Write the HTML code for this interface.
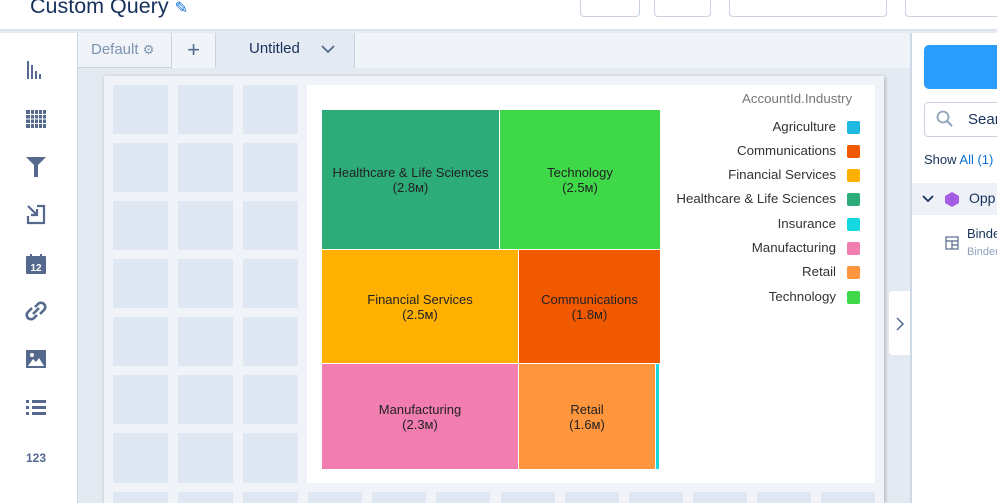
<!DOCTYPE html>
<html style="width:997px;height:503px;overflow:hidden"><head><meta charset="utf-8"><style>
*{margin:0;padding:0;box-sizing:border-box}
body{width:997px;height:503px;overflow:hidden;position:relative;background:#e4eaf2;font-family:"Liberation Sans",sans-serif;color:#16325c}
.a{position:absolute}
.cell{position:absolute;background:#dee7f2}
.tm{position:absolute;display:flex;flex-direction:column;align-items:center;justify-content:center;font-size:13px;color:#222;text-align:center;line-height:15px}
.lg{position:absolute;right:161px;font-size:13.3px;color:#333;text-align:right;white-space:nowrap}
.sw{position:absolute;left:847px;width:13px;height:13px;border-radius:2px}
</style></head><body>
<div class="a" style="left:0;top:0;width:997px;height:31px;background:#fff;border-bottom:2px solid #dde4ee"></div>
<div class="a" style="left:30px;top:-6px;font-size:21.5px;color:#16325c">Custom Query <span style="color:#0b6fd6;font-size:16px">✎</span></div>
<div class="a" style="left:580px;top:-10px;width:60px;height:27px;border:1px solid #c9d3e0;border-radius:4px;background:#fff"></div>
<div class="a" style="left:654px;top:-10px;width:57px;height:27px;border:1px solid #c9d3e0;border-radius:4px;background:#fff"></div>
<div class="a" style="left:729px;top:-10px;width:158px;height:27px;border:1px solid #c9d3e0;border-radius:4px;background:#fff"></div>
<div class="a" style="left:905px;top:-10px;width:100px;height:27px;border:1px solid #c9d3e0;border-radius:4px;background:#fff"></div>
<div class="a" style="left:0;top:33px;width:78px;height:470px;background:#fff;border-right:1px solid #cfd9e6"></div>
<svg class="a" style="left:0;top:33px" width="77" height="470" fill="#54698d">
<g transform="translate(27,28)"><rect x="0" y="0" width="2" height="18"/><rect x="4" y="4" width="2" height="14"/><rect x="8" y="10" width="2" height="8"/><rect x="12" y="13" width="2" height="5"/></g>
<g transform="translate(26,77)"><rect width="20" height="18"/><g stroke="#fff" stroke-width="1"><line x1="0" y1="4.5" x2="20" y2="4.5"/><line x1="0" y1="9" x2="20" y2="9"/><line x1="0" y1="13.5" x2="20" y2="13.5"/><line x1="4.5" y1="0" x2="4.5" y2="18"/><line x1="8.5" y1="0" x2="8.5" y2="18"/><line x1="12.5" y1="0" x2="12.5" y2="18"/><line x1="16.5" y1="0" x2="16.5" y2="18"/></g></g>
<path transform="translate(26,124)" d="M0 0H20L12 8V20H8V8Z"/>
<g transform="translate(27,172)" fill="none" stroke="#54698d" stroke-width="2.2"><path d="M10 1H17V18H1V11"/><path d="M1 1L10 10M10 4V10H4"/></g>
<g transform="translate(26,221)"><rect y="2" width="20" height="18" rx="1"/><rect x="4" y="0" width="2" height="4"/><rect x="14" y="0" width="2" height="4"/><text x="10" y="17" fill="#fff" font-size="10" font-weight="bold" text-anchor="middle" font-family="Liberation Sans">12</text></g>
<g transform="translate(26,268)" fill="none" stroke="#54698d" stroke-width="2.6"><path d="M9 6L12 3A4 4 0 0 1 18 9L14 13"/><path d="M11 14L8 17A4 4 0 0 1 2 11L6 7"/><path d="M7 13L13 7"/></g>
<g transform="translate(26,317)"><rect width="20" height="18"/><path d="M2 16L7 9L10 12L13 8L18 16Z" fill="#fff"/><circle cx="6" cy="5" r="2" fill="#fff"/></g>
<g transform="translate(26,367)"><rect x="0" y="0" width="3" height="3"/><rect x="6" y="0" width="14" height="3"/><rect x="0" y="6" width="3" height="3"/><rect x="6" y="6" width="14" height="3"/><rect x="0" y="12" width="3" height="3"/><rect x="6" y="12" width="14" height="3"/></g>
<text x="36" y="429" font-size="12" font-weight="bold" text-anchor="middle" font-family="Liberation Sans">123</text>
</svg>
<div class="a" style="left:78px;top:33px;width:832px;height:35px;background:#f0f4f9"></div>
<div class="a" style="left:78px;top:33px;width:94px;height:35px;border-right:1px solid #c9d3e0;border-bottom:1px solid #c9d3e0;font-size:15px;color:#7d93b0;padding:8px 0 0 13px">Default <span style="font-size:13px">⚙</span></div>
<div class="a" style="left:172px;top:33px;width:44px;height:35px;border-right:1px solid #c9d3e0;font-size:22px;color:#54698d;text-align:center;line-height:33px">+</div>
<div class="a" style="left:216px;top:33px;width:139px;height:35px;background:#e4eaf2;border-right:1px solid #c9d3e0;font-size:15px;color:#16325c;padding:7px 0 0 33px">Untitled</div>
<svg class="a" style="left:321px;top:44px" width="14" height="10"><path d="M1 2L7 8L13 2" fill="none" stroke="#54698d" stroke-width="1.8"/></svg>
<div class="a" style="left:104px;top:76px;width:780px;height:427px;background:#f0f4f9;box-shadow:1px 1px 4px rgba(0,0,0,.25)"></div>
<div class="cell" style="left:113px;top:85px;width:55px;height:49px"></div><div class="cell" style="left:178px;top:85px;width:55px;height:49px"></div><div class="cell" style="left:243px;top:85px;width:55px;height:49px"></div>
<div class="cell" style="left:113px;top:143px;width:55px;height:49px"></div><div class="cell" style="left:178px;top:143px;width:55px;height:49px"></div><div class="cell" style="left:243px;top:143px;width:55px;height:49px"></div>
<div class="cell" style="left:113px;top:201px;width:55px;height:49px"></div><div class="cell" style="left:178px;top:201px;width:55px;height:49px"></div><div class="cell" style="left:243px;top:201px;width:55px;height:49px"></div>
<div class="cell" style="left:113px;top:259px;width:55px;height:49px"></div><div class="cell" style="left:178px;top:259px;width:55px;height:49px"></div><div class="cell" style="left:243px;top:259px;width:55px;height:49px"></div>
<div class="cell" style="left:113px;top:317px;width:55px;height:49px"></div><div class="cell" style="left:178px;top:317px;width:55px;height:49px"></div><div class="cell" style="left:243px;top:317px;width:55px;height:49px"></div>
<div class="cell" style="left:113px;top:375px;width:55px;height:49px"></div><div class="cell" style="left:178px;top:375px;width:55px;height:49px"></div><div class="cell" style="left:243px;top:375px;width:55px;height:49px"></div>
<div class="cell" style="left:113px;top:433px;width:55px;height:50px"></div><div class="cell" style="left:178px;top:433px;width:55px;height:50px"></div><div class="cell" style="left:243px;top:433px;width:55px;height:50px"></div>
<div class="cell" style="left:113px;top:492px;width:55px;height:11px"></div><div class="cell" style="left:178px;top:492px;width:55px;height:11px"></div><div class="cell" style="left:243px;top:492px;width:55px;height:11px"></div><div class="cell" style="left:308px;top:492px;width:54px;height:11px"></div><div class="cell" style="left:372px;top:492px;width:54px;height:11px"></div><div class="cell" style="left:436px;top:492px;width:54px;height:11px"></div><div class="cell" style="left:501px;top:492px;width:54px;height:11px"></div><div class="cell" style="left:565px;top:492px;width:54px;height:11px"></div><div class="cell" style="left:629px;top:492px;width:54px;height:11px"></div><div class="cell" style="left:693px;top:492px;width:54px;height:11px"></div><div class="cell" style="left:757px;top:492px;width:54px;height:11px"></div><div class="cell" style="left:821px;top:492px;width:54px;height:11px"></div>
<div class="a" style="left:307px;top:85px;width:568px;height:398px;background:#fff"></div>
<div class="tm" style="left:322px;top:110px;width:177px;height:139px;background:#2dab79">Healthcare &amp; Life Sciences<br>(2.8м)</div>
<div class="tm" style="left:500px;top:110px;width:160px;height:139px;background:#3ed849">Technology<br>(2.5м)</div>
<div class="tm" style="left:322px;top:250px;width:196px;height:113px;background:#ffb000">Financial Services<br>(2.5м)</div>
<div class="tm" style="left:519px;top:250px;width:141px;height:113px;background:#f05900">Communications<br>(1.8м)</div>
<div class="tm" style="left:322px;top:364px;width:196px;height:105px;background:#f17db1">Manufacturing<br>(2.3м)</div>
<div class="tm" style="left:519px;top:364px;width:136px;height:105px;background:#ff963d">Retail<br>(1.6м)</div>
<div class="a" style="left:656px;top:364px;width:3px;height:105px;background:#14d7e0"></div>
<div class="a" style="left:742px;top:91px;font-size:13.3px;color:#777">AccountId.Industry</div>
<div class="lg" style="top:119px">Agriculture</div><div class="sw" style="top:121px;background:#1fb8e0"></div>
<div class="lg" style="top:143px">Communications</div><div class="sw" style="top:145px;background:#f05900"></div>
<div class="lg" style="top:167px">Financial Services</div><div class="sw" style="top:169px;background:#ffb000"></div>
<div class="lg" style="top:191px">Healthcare &amp; Life Sciences</div><div class="sw" style="top:193px;background:#2dab79"></div>
<div class="lg" style="top:216px">Insurance</div><div class="sw" style="top:218px;background:#14d7e0"></div>
<div class="lg" style="top:240px">Manufacturing</div><div class="sw" style="top:242px;background:#f17db1"></div>
<div class="lg" style="top:264px">Retail</div><div class="sw" style="top:266px;background:#ff963d"></div>
<div class="lg" style="top:289px">Technology</div><div class="sw" style="top:291px;background:#3ed849"></div>
<div class="a" style="left:889px;top:291px;width:21px;height:64px;background:#fff;border-radius:4px 0 0 4px"></div>
<svg class="a" style="left:895px;top:317px" width="10" height="14"><path d="M2 1L8 7L2 13" fill="none" stroke="#54698d" stroke-width="1.5"/></svg>
<div class="a" style="left:910px;top:33px;width:87px;height:470px;background:#fff;border-left:2px solid #cfd9e6"></div>
<div class="a" style="left:924px;top:45px;width:80px;height:44px;background:#2a9cfb;border-radius:5px"></div>
<div class="a" style="left:924px;top:102px;width:80px;height:35px;border:1px solid #c9d3e0;border-radius:4px;font-size:15px;color:#16325c;padding:8px 0 0 43px">Search</div>
<svg class="a" style="left:936px;top:110px" width="18" height="18"><circle cx="7" cy="7" r="5.5" fill="none" stroke="#8fa3bd" stroke-width="1.8"/><path d="M11 11L16 16" stroke="#8fa3bd" stroke-width="2"/></svg>
<div class="a" style="left:924px;top:152px;font-size:13px;color:#16325c;white-space:nowrap">Show <span style="color:#0b6fd6">All (1)</span></div>
<div class="a" style="left:912px;top:183px;width:85px;height:32px;background:#eef2f8"></div>
<svg class="a" style="left:922px;top:194px" width="12" height="10"><path d="M1 2L6 7L11 2" fill="none" stroke="#16325c" stroke-width="1.8"/></svg>
<svg class="a" style="left:944px;top:191px" width="16" height="17"><path d="M8 1L15 5V12L8 16L1 12V5Z" fill="#a45ee5"/></svg>
<div class="a" style="left:969px;top:190px;font-size:14px;color:#16325c">Opp</div>
<svg class="a" style="left:945px;top:236px" width="14" height="14" fill="none" stroke="#54698d" stroke-width="1.2"><rect x="1" y="1" width="12" height="12"/><path d="M1 5H13M7 5V13M7 9H13"/></svg>
<div class="a" style="left:967px;top:226px;font-size:13px;color:#16325c">Binder</div>
<div class="a" style="left:967px;top:246px;font-size:11px;color:#8fa3bd">Binder</div>
</body></html>
